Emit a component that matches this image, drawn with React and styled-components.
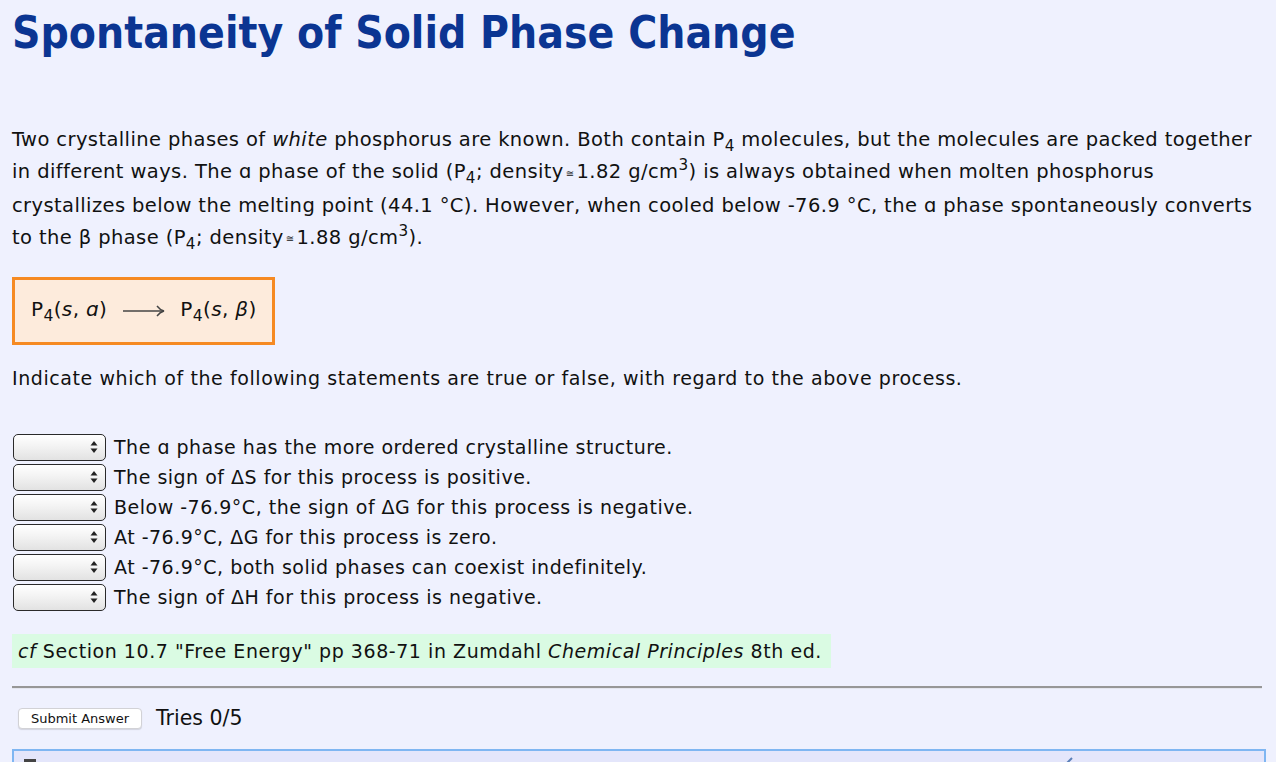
import React from "react";
import styled, { createGlobalStyle } from "styled-components";

const Global = createGlobalStyle`
  html, body { margin: 0; padding: 0; background: #eff1fe; }
  body { font-family: "DejaVu Sans", Verdana, sans-serif; color: #111; }
`;

const Page = styled.div`
  padding: 0 10px 0 12px;
  display: flex;
  flex-direction: column;
`;

const Title = styled.h1`
  margin: 8px 0 0 0;
  font-family: "DejaVu Sans Condensed", "DejaVu Sans", sans-serif;
  font-weight: bold;
  font-size: 44px;
  line-height: 50px;
  color: #0b3592;
`;

const Para = styled.p`
  margin: 66px 0 0 0;
  font-size: 19.5px;
  letter-spacing: 0.4px;
  line-height: 32px;
  width: 1252px;
  sub, sup { font-size: 0.78em; line-height: 1; }
  sub { vertical-align: -5px; }
  sup { vertical-align: 8px; }
`;

const Approx = styled.span`
  font-size: 10px;
  margin: 0 2px;
  vertical-align: 0.15em;
`;

const Reaction = styled.div`
  margin-top: 22px;
  align-self: flex-start;
  display: flex;
  align-items: center;
  gap: 15px;
  height: 62px;
  padding: 0 15px 0 16px;
  border: 3px solid #f68a22;
  background: #fdebdc;
  font-size: 20px;
  letter-spacing: 0.35px;
  box-sizing: content-box;
  width: 226px;
  sub { font-size: 0.78em; vertical-align: -5px; line-height: 1; }
  i { font-style: italic; }
`;

const Question = styled.p`
  margin: 18px 0 0 0;
  font-size: 19px;
  letter-spacing: 0.58px;
  line-height: 30px;
`;

const List = styled.div`
  margin-top: 39px;
  display: flex;
  flex-direction: column;
`;

const Row = styled.div`
  display: flex;
  align-items: center;
  height: 30px;
  gap: 8px;
  font-size: 19px;
  letter-spacing: 0.5px;
`;

const Select = styled.div`
  width: 84px;
  height: 25px;
  border: 1.5px solid #2a2a2a;
  border-radius: 5px;
  background: linear-gradient(#ffffff, #f3f3f3 45%, #e2e2e2);
  display: flex;
  align-items: center;
  justify-content: flex-end;
  padding-right: 7px;
  box-sizing: content-box;
  flex: none;
  margin-left: 1px;
`;

const Cite = styled.div`
  margin-top: 22px;
  align-self: flex-start;
  background: #dafbe3;
  padding: 0 9px 0 6px;
  height: 34px;
  display: flex;
  align-items: center;
  font-size: 19px;
  letter-spacing: 0.55px;
  white-space: nowrap;
`;

const Rule = styled.div`
  margin-top: 18px;
  height: 2px;
  background: #979797;
  border-bottom: 1px solid #e4e6ef;
  width: 1250px;
`;

const Footer = styled.div`
  margin-top: 17px;
  display: flex;
  align-items: center;
  gap: 14px;
  padding-left: 6px;
`;

const Button = styled.button`
  width: 124px;
  height: 21px;
  border: 1px solid #d2d2d6;
  border-radius: 4px;
  background: #ffffff;
  font-family: "DejaVu Sans", sans-serif;
  font-size: 13px;
  color: #111;
  padding: 0;
  box-shadow: 0 1px 1px rgba(0,0,0,0.12);
`;

const Tries = styled.span`
  font-family: "DejaVu Sans", sans-serif;
  font-size: 20.5px;
`;

const Panel = styled.div`
  margin-top: 19px;
  height: 40px;
  width: 1250px;
  border: 2px solid #7fb6f2;
  background: #e4e6fb;
  position: relative;
`;

const PanelIcon = styled.div`
  position: absolute;
  left: 10px;
  top: 8px;
  width: 12px;
  height: 4px;
  background: #444;
`;

const PanelMark = styled.svg`
  position: absolute;
  left: 1048px;
  top: 5px;
`;

const Arrows = () => (
  <svg width="8" height="14" viewBox="0 0 8 14">
    <path d="M4 1 L7.5 5.5 H0.5 Z" fill="#222" />
    <path d="M4 13 L7.5 8.5 H0.5 Z" fill="#222" />
  </svg>
);

const LongArrow = () => (
  <svg width="43" height="14" viewBox="0 0 43 14">
    <path d="M1 7 H41" stroke="#444" strokeWidth="1.6" />
    <path d="M35 2 Q38 6 42 7 Q38 8 35 12" stroke="#444" strokeWidth="1.4" fill="none" />
  </svg>
);

const statements = [
  <>The ɑ phase has the more ordered crystalline structure.</>,
  <>The sign of ΔS for this process is positive.</>,
  <>Below -76.9°C, the sign of ΔG for this process is negative.</>,
  <>At -76.9°C, ΔG for this process is zero.</>,
  <>At -76.9°C, both solid phases can coexist indefinitely.</>,
  <>The sign of ΔH for this process is negative.</>,
];

export default function App() {
  return (
    <>
      <Global />
      <Page>
        <Title>Spontaneity of Solid Phase Change</Title>
        <Para>
          Two crystalline phases of <i>white</i> phosphorus are known. Both contain P<sub>4</sub> molecules, but the molecules are packed together in different ways. The ɑ phase of the solid (P<sub>4</sub>; density<Approx>≅</Approx>1.82 g/cm<sup>3</sup>) is always obtained when molten phosphorus crystallizes below the melting point (44.1 °C). However, when cooled below -76.9 °C, the ɑ phase spontaneously converts to the β phase (P<sub>4</sub>; density<Approx>≅</Approx>1.88 g/cm<sup>3</sup>).
        </Para>
        <Reaction>
          <span>P<sub>4</sub>(<i>s</i>, <i>ɑ</i>)</span>
          <LongArrow />
          <span>P<sub>4</sub>(<i>s</i>, <i>β</i>)</span>
        </Reaction>
        <Question>Indicate which of the following statements are true or false, with regard to the above process.</Question>
        <List>
          {statements.map((s, i) => (
            <Row key={i}>
              <Select><Arrows /></Select>
              <span>{s}</span>
            </Row>
          ))}
        </List>
        <Cite>
          <span><i>cf</i> Section 10.7 "Free Energy" pp 368-71 in Zumdahl <i>Chemical Principles</i> 8th ed.</span>
        </Cite>
        <Rule />
        <Footer>
          <Button>Submit Answer</Button>
          <Tries>Tries 0/5</Tries>
        </Footer>
        <Panel>
          <PanelIcon />
          <PanelMark width="12" height="12" viewBox="0 0 12 12">
            <path d="M2 10 L10 2" stroke="#5a7fb8" strokeWidth="2" />
          </PanelMark>
        </Panel>
      </Page>
    </>
  );
}
